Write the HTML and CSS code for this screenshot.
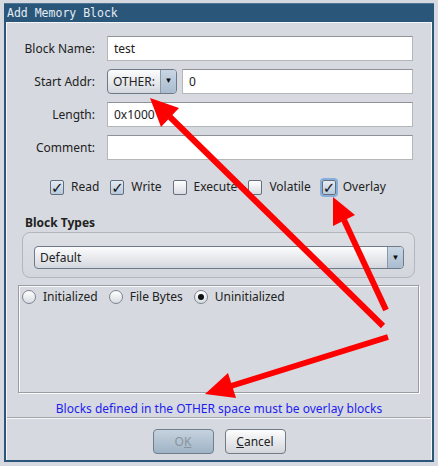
FILE: index.html
```html
<!DOCTYPE html>
<html lang="en">
  <head>
    <meta charset="UTF-8" />
    <title>Add Memory Block</title>
    <link rel="stylesheet" href="styles.css">
  </head>
  <body>
    <div class="window">
      <div class="titlebar">Add Memory Block</div>

      <div class="content">
        <div class="form">
          <label class="form-label">Block Name:</label>
          <div class="field">test</div>

          <label class="form-label">Start Addr:</label>
          <div class="addr-row">
            <div class="combo combo-space">
              <span class="combo-text">OTHER:</span>
              <span class="combo-btn">&#9660;</span>
            </div>
            <div class="field field-grow">0</div>
          </div>

          <label class="form-label">Length:</label>
          <div class="field">0x1000</div>

          <label class="form-label">Comment:</label>
          <div class="field"></div>
        </div>

        <div class="checks">
          <span class="check"><span class="box checked">&#10003;</span>Read</span>
          <span class="check"><span class="box checked">&#10003;</span>Write</span>
          <span class="check"><span class="box"></span>Execute</span>
          <span class="check"><span class="box"></span>Volatile</span>
          <span class="check"><span class="box checked focused">&#10003;</span>Overlay</span>
        </div>

        <div class="section-title">Block Types</div>
        <div class="types-panel">
          <div class="combo combo-wide">
            <span class="combo-text">Default</span>
            <span class="combo-btn">&#9660;</span>
          </div>
        </div>

        <div class="init-panel">
          <div class="radios">
            <span class="radio-item"><span class="radio"></span>Initialized</span>
            <span class="radio-item"><span class="radio"></span>File Bytes</span>
            <span class="radio-item"><span class="radio selected"></span>Uninitialized</span>
          </div>
        </div>

        <div class="status">Blocks defined in the OTHER space must be overlay blocks</div>

        <div class="buttons">
          <button class="btn" disabled>O<u>K</u></button>
          <button class="btn"><u>C</u>ancel</button>
        </div>
      </div>
    </div>

    <!-- annotation arrows drawn over the dialog -->
    <svg class="arrows" width="438" height="466" viewBox="0 0 438 466">
      <g fill="#ff0000" stroke="#ff0000" stroke-width="6">
        <line x1="383" y1="326" x2="170" y2="117" />
        <line x1="386" y1="310" x2="344" y2="220" />
        <line x1="388" y1="337" x2="231" y2="386" />
      </g>
      <g fill="#ff0000">
        <polygon points="150,98 179,108 161,127" />
        <polygon points="333,197 355,215 333,226" />
        <polygon points="205,394 236,398 228,373" />
      </g>
    </svg>
  </body>
</html>
```

FILE: styles.css
```css
* {
  box-sizing: border-box;
}

body {
  margin: 0;
  background: #d6d9df;
  font-family: "Noto Sans", sans-serif;
  font-size: 12px;
  color: #222;
}

.window {
  margin: 3px 0 0 4px;
  width: 430px;
  height: 459px;
  border: 2px solid #2a567a;
  border-top: none;
  display: flex;
  flex-direction: column;
}

.titlebar {
  height: 19px;
  margin: 0 -2px;
  padding: 2px 0 0 3px;
  background: #2a567a;
  border-top: 1px solid #4d7698;
  color: #e4ecf3;
  font-family: "DejaVu Sans Mono", monospace;
  font-size: 11.5px;
  line-height: 15px;
}

.content {
  flex: 1;
  border: 1px solid #f5f6f8;
  border-bottom: none;
  background: #d6d9df;
  display: flex;
  flex-direction: column;
}

/* form rows */
.form {
  display: grid;
  grid-template-columns: 88px 1fr;
  column-gap: 12px;
  row-gap: 8px;
  padding: 13px 18px 0 0;
}

.form-label {
  text-align: right;
  line-height: 25px;
}

.field {
  height: 25px;
  background: #fff;
  border: 1px solid #b4b6ba;
  border-top-color: #8f9296;
  padding: 0 6px;
  line-height: 23px;
}

.addr-row {
  display: flex;
  gap: 5px;
}

.field-grow {
  flex: 1;
}

.combo {
  display: flex;
  border: 1px solid #6e7a88;
  border-radius: 4px;
  background: linear-gradient(#fcfcfd, #d4d8de);
  overflow: hidden;
}

.combo-space {
  width: 70px;
  height: 25px;
}

.combo-text {
  flex: 1;
  padding-left: 5px;
  line-height: 23px;
}

.combo-btn {
  width: 16px;
  border-left: 1px solid #8a98a8;
  background: linear-gradient(#c8d6e4, #a9bccf);
  font-size: 8px;
  text-align: center;
  line-height: 20px;
  color: #111;
}

/* checkboxes */
.checks {
  display: flex;
  gap: 11px;
  padding: 19px 0 0 43px;
}

.check {
  display: flex;
  align-items: center;
  gap: 7px;
  line-height: 16px;
}

.box {
  width: 14px;
  height: 15px;
  border: 1px solid #66707c;
  border-radius: 2px;
  background: linear-gradient(#ffffff, #d8dce2);
  font-family: "DejaVu Sans", sans-serif;
  font-size: 15px;
  font-weight: bold;
  line-height: 14px;
  text-align: center;
  color: #111;
}

.box.checked {
  background: linear-gradient(#e4ecf4, #b6c8da);
}

.box.focused {
  box-shadow: 0 0 0 2px #86aedb;
}

/* block types */
.section-title {
  font-weight: bold;
  padding: 20px 0 0 18px;
  line-height: 16px;
}

.types-panel {
  margin: 1px 16px 0 15px;
  height: 46px;
  border: 1px solid #b2b6bd;
  border-radius: 8px;
  background: linear-gradient(#dcdfe4, #d3d6dc);
  padding: 13px 10px 0 11px;
}

.combo-wide {
  height: 23px;
}

.combo-wide .combo-text {
  line-height: 21px;
}

.combo-wide .combo-btn {
  line-height: 19px;
}

.init-panel {
  margin: 7px 12px 0 11px;
  height: 108px;
  border: 1px solid #9a9da2;
  box-shadow: inset 1px 1px 0 #fafbfc, 1px 1px 0 #fafbfc;
  padding: 2px 0 0 3px;
}

.radios {
  display: flex;
  gap: 11px;
}

.radio-item {
  display: flex;
  align-items: center;
  gap: 7px;
  line-height: 18px;
}

.radio {
  width: 14px;
  height: 14px;
  border: 1px solid #7d8590;
  border-radius: 50%;
  background: linear-gradient(#ffffff, #d8dce2);
  display: flex;
  align-items: center;
  justify-content: center;
}

.radio.selected::after {
  content: "";
  width: 6px;
  height: 6px;
  border-radius: 50%;
  background: #111;
}

.status {
  text-align: center;
  color: #1d1df0;
  line-height: 14px;
  padding-top: 9px;
}

.buttons {
  margin-top: 1px;
  border-top: 1px solid #a3a6ab;
  box-shadow: inset 0 1px 0 #f5f6f8;
  display: flex;
  justify-content: center;
  gap: 11px;
  padding-top: 11px;
}

.btn {
  width: 61px;
  height: 25px;
  border: 1px solid #727a84;
  border-radius: 4px;
  background: linear-gradient(#fdfdfe, #d2d5da);
  font-family: "Noto Sans", sans-serif;
  font-size: 12px;
  color: #222;
  padding: 0;
}

.btn:disabled {
  background: linear-gradient(#c6d2de, #9fb3c6);
  border-color: #6e7e8e;
  color: #8a949e;
}

.arrows {
  position: absolute;
  top: 0;
  left: 0;
  pointer-events: none;
}
```
